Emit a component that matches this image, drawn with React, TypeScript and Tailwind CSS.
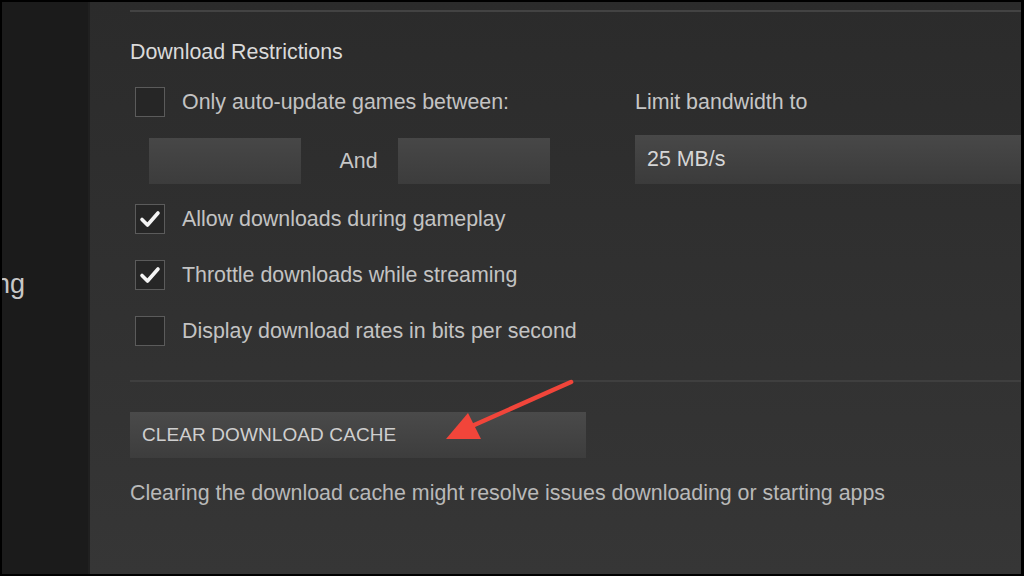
import React from 'react';

function Box({ checked }: { checked?: boolean }) {
  return (
    <div className="w-[30px] h-[30px] shrink-0 border border-[#5b5b5b] bg-[#262626] flex items-center justify-center">
      {checked && (
        <svg width="22" height="20" viewBox="0 0 22 20">
          <path d="M3 10.5 L8.5 16 L19 4" fill="none" stroke="#f4f4f4" strokeWidth="3.6" strokeLinecap="round" strokeLinejoin="round" />
        </svg>
      )}
    </div>
  );
}

function Check({ label, checked }: { label: string; checked?: boolean }) {
  return (
    <div className="flex items-center gap-[17px] ml-[5px] h-[30px]">
      <Box checked={checked} />
      <span className="text-[21.4px] leading-[24px] text-[#c3c3c3] whitespace-nowrap">{label}</span>
    </div>
  );
}

export default function App() {
  return (
    <div className="relative w-[1024px] h-[576px] bg-black pt-[2px] pb-[2px] pl-[2px] pr-[3px] flex overflow-hidden" style={{ fontFamily: '"Liberation Sans", Arial, sans-serif' }}>
      <div className="w-[88px] shrink-0 bg-[#1b1b1b] border-r-2 border-[#202020] overflow-hidden flex items-center justify-end pr-[63px]">
        <span className="text-[27px] leading-[32px] text-[#c8c8c8] whitespace-nowrap -mt-[8px]">Broadcasting</span>
      </div>

      <div className="flex-1 bg-gradient-to-b from-[#2b2b2b] to-[#363636] pl-[40px] pt-[8px] flex flex-col">
        <div className="h-[2px] bg-[#434343]" />

        <div className="mt-[28px] text-[21.4px] leading-[24px] text-[#dadada]">Download Restrictions</div>

        <div className="flex mt-[23px]">
          <div className="w-[505px] shrink-0 flex flex-col">
            <Check label="Only auto-update games between:" />
            <div className="flex items-center ml-[19px] mt-[21px]">
              <div className="w-[152px] h-[46px] bg-gradient-to-b from-[#474747] to-[#3c3c3c]" />
              <span className="w-[97px] pl-[18px] text-center text-[21.4px] text-[#c6c6c6]">And</span>
              <div className="w-[152px] h-[46px] bg-gradient-to-b from-[#474747] to-[#3c3c3c]" />
            </div>
          </div>
          <div className="flex-1 flex flex-col">
            <div className="h-[30px] flex items-center text-[21.4px] text-[#c6c6c6]">Limit bandwidth to</div>
            <div className="mt-[18px] h-[49px] bg-gradient-to-b from-[#484848] to-[#3b3b3b] flex items-center pl-[12px] text-[21.4px] text-[#d6d6d6]">
              25 MB/s
            </div>
          </div>
        </div>

        <div className="flex flex-col gap-[26px] mt-[20px]">
          <Check label="Allow downloads during gameplay" checked />
          <Check label="Throttle downloads while streaming" checked />
          <Check label="Display download rates in bits per second" />
        </div>

        <div className="h-[2px] bg-[#3f3f3f] mt-[34px]" />

        <button className="mt-[30px] w-[456px] h-[46px] bg-gradient-to-b from-[#4a4a4a] to-[#3d3d3d] text-left pl-[12px] text-[19px] text-[#cfcfcf] tracking-[0.1px]">
          CLEAR DOWNLOAD CACHE
        </button>

        <div className="mt-[23px] text-[21.4px] leading-[24px] text-[#b9b9b9] whitespace-nowrap">
          Clearing the download cache might resolve issues downloading or starting apps
        </div>
      </div>

      <svg className="absolute left-0 top-0 pointer-events-none" width="1024" height="576" viewBox="0 0 1024 576">
        <line x1="571" y1="382" x2="472" y2="426" stroke="#f1453a" strokeWidth="4.5" strokeLinecap="round" />
        <polygon points="446,439 468,413 481,439" fill="#f1453a" />
      </svg>
    </div>
  );
}
